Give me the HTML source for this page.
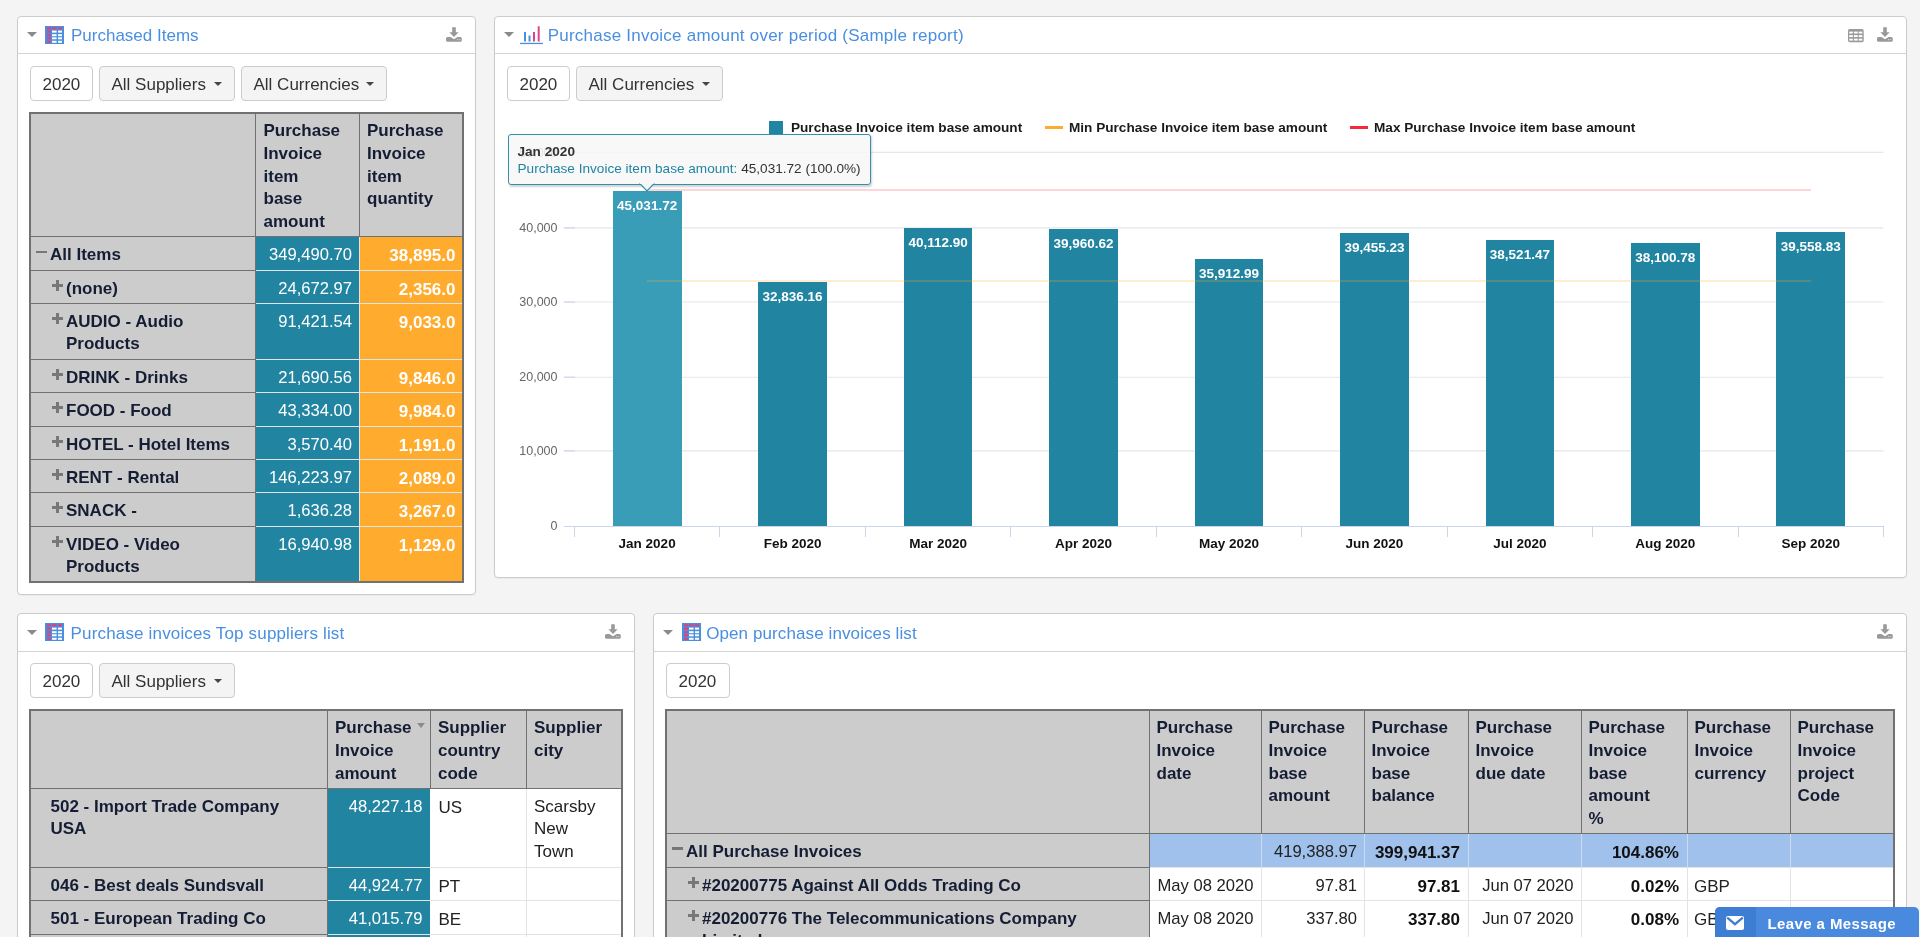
<!DOCTYPE html><html><head><meta charset="utf-8"><style>
html,body{margin:0;padding:0;}
body{will-change:transform;width:1920px;height:937px;overflow:hidden;position:relative;background:#f4f4f4;font-family:"Liberation Sans", sans-serif;}
</style></head><body>
<div style="position:absolute;left:17px;top:16px;width:457px;height:577px;border:1px solid #cbcbcb;border-radius:4px;background:#fff;box-shadow:0 1px 1px rgba(0,0,0,0.04)"></div>
<div style="position:absolute;left:18px;top:53px;width:457px;height:1px;background:#d4d4d4;"></div>
<div style="position:absolute;left:27px;top:32px;width:0;height:0;border-left:5.0px solid transparent;border-right:5.0px solid transparent;border-top:5px solid #8a8a8a"></div>
<svg style="position:absolute;left:45px;top:26px" width="19" height="18" viewBox="0 0 19 18">
<rect x="0" y="0" width="19" height="18" fill="#4a8fdf"/>
<g fill="#e0407a">
<rect x="2" y="1.3" width="4" height="2"/><rect x="7" y="1.3" width="4.6" height="2"/><rect x="13" y="1.3" width="4" height="2"/>
<rect x="2" y="4.6" width="4" height="2"/><rect x="2" y="8.2" width="4" height="2"/><rect x="2" y="11.3" width="4" height="2"/><rect x="2" y="14.8" width="4" height="2"/>
</g>
<g fill="#fff">
<rect x="7" y="4.6" width="4.6" height="2"/><rect x="13" y="4.6" width="4" height="2"/>
<rect x="7" y="8.2" width="4.6" height="2"/><rect x="13" y="8.2" width="4" height="2"/>
<rect x="7" y="11.3" width="4.6" height="2"/><rect x="13" y="11.3" width="4" height="2"/>
<rect x="7" y="14.8" width="4.6" height="2"/><rect x="13" y="14.8" width="4" height="2"/>
</g></svg>
<div style="position:absolute;left:71px;top:27.00px;font-size:17px;line-height:17px;font-weight:normal;color:#4a8fdf;white-space:nowrap;">Purchased Items</div>
<svg style="position:absolute;left:446px;top:27px" width="16" height="15" viewBox="0 0 16 15">
<path fill="#999" d="M6.2 0.2h3.6v5.1h2.9L8 9.9 3.3 5.3h2.9z"/>
<path fill="#999" d="M0 11.5Q0 10 1.5 10H4.4L8 12.3 11.6 10H14.3Q15.8 10 15.8 11.5V13.2Q15.8 14.7 14.3 14.7H1.5Q0 14.7 0 13.2Z"/>
<circle cx="11.6" cy="12.6" r="0.65" fill="#ddd"/><circle cx="13.8" cy="12.6" r="0.65" fill="#ddd"/>
</svg>
<div style="position:absolute;left:30px;top:66px;width:61px;height:33px;border:1px solid #cccccc;border-radius:4px;background:#fff"></div>
<div style="position:absolute;left:42.5px;top:75.50px;font-size:17px;line-height:17px;font-weight:normal;color:#333;white-space:nowrap;">2020</div>
<div style="position:absolute;left:99px;top:66px;width:134px;height:33px;border:1px solid #cccccc;border-radius:4px;background:#f4f4f4"></div>
<div style="position:absolute;left:111.5px;top:75.50px;font-size:17px;line-height:17px;font-weight:normal;color:#333;white-space:nowrap;">All Suppliers</div>
<div style="position:absolute;left:214px;top:81.5px;width:0;height:0;border-left:4.0px solid transparent;border-right:4.0px solid transparent;border-top:4.3px solid #444"></div>
<div style="position:absolute;left:241px;top:66px;width:144px;height:33px;border:1px solid #cccccc;border-radius:4px;background:#f4f4f4"></div>
<div style="position:absolute;left:253.5px;top:75.50px;font-size:17px;line-height:17px;font-weight:normal;color:#333;white-space:nowrap;">All Currencies</div>
<div style="position:absolute;left:366px;top:81.5px;width:0;height:0;border-left:4.0px solid transparent;border-right:4.0px solid transparent;border-top:4.3px solid #444"></div>
<div style="position:absolute;left:29px;top:112px;width:435px;height:471px;background:#717171;"></div>
<div style="position:absolute;left:31px;top:114px;width:431px;height:467px;background:#cccccc;"></div>
<div style="position:absolute;left:256px;top:237px;width:103px;height:33px;background:#2185a1;"></div>
<div style="position:absolute;left:360px;top:237px;width:102px;height:33px;background:#ffab2d;"></div>
<div style="position:absolute;left:256px;top:270px;width:206px;height:1px;background:#dfe6ea;"></div>
<div style="position:absolute;left:256px;top:271px;width:103px;height:32px;background:#2185a1;"></div>
<div style="position:absolute;left:360px;top:271px;width:102px;height:32px;background:#ffab2d;"></div>
<div style="position:absolute;left:256px;top:303px;width:206px;height:1px;background:#dfe6ea;"></div>
<div style="position:absolute;left:256px;top:304px;width:103px;height:55px;background:#2185a1;"></div>
<div style="position:absolute;left:360px;top:304px;width:102px;height:55px;background:#ffab2d;"></div>
<div style="position:absolute;left:256px;top:359px;width:206px;height:1px;background:#dfe6ea;"></div>
<div style="position:absolute;left:256px;top:360px;width:103px;height:32px;background:#2185a1;"></div>
<div style="position:absolute;left:360px;top:360px;width:102px;height:32px;background:#ffab2d;"></div>
<div style="position:absolute;left:256px;top:392px;width:206px;height:1px;background:#dfe6ea;"></div>
<div style="position:absolute;left:256px;top:393px;width:103px;height:33px;background:#2185a1;"></div>
<div style="position:absolute;left:360px;top:393px;width:102px;height:33px;background:#ffab2d;"></div>
<div style="position:absolute;left:256px;top:426px;width:206px;height:1px;background:#dfe6ea;"></div>
<div style="position:absolute;left:256px;top:427px;width:103px;height:32px;background:#2185a1;"></div>
<div style="position:absolute;left:360px;top:427px;width:102px;height:32px;background:#ffab2d;"></div>
<div style="position:absolute;left:256px;top:459px;width:206px;height:1px;background:#dfe6ea;"></div>
<div style="position:absolute;left:256px;top:460px;width:103px;height:32px;background:#2185a1;"></div>
<div style="position:absolute;left:360px;top:460px;width:102px;height:32px;background:#ffab2d;"></div>
<div style="position:absolute;left:256px;top:492px;width:206px;height:1px;background:#dfe6ea;"></div>
<div style="position:absolute;left:256px;top:493px;width:103px;height:33px;background:#2185a1;"></div>
<div style="position:absolute;left:360px;top:493px;width:102px;height:33px;background:#ffab2d;"></div>
<div style="position:absolute;left:256px;top:526px;width:206px;height:1px;background:#dfe6ea;"></div>
<div style="position:absolute;left:256px;top:527px;width:103px;height:54px;background:#2185a1;"></div>
<div style="position:absolute;left:360px;top:527px;width:102px;height:54px;background:#ffab2d;"></div>
<div style="position:absolute;left:359px;top:237px;width:1px;height:344px;background:#e9e4dc;"></div>
<div style="position:absolute;left:255px;top:114px;width:1px;height:467px;background:#717171;"></div>
<div style="position:absolute;left:359px;top:114px;width:1px;height:123px;background:#717171;"></div>
<div style="position:absolute;left:31px;top:236px;width:431px;height:1px;background:#717171;"></div>
<div style="position:absolute;left:31px;top:270px;width:224px;height:1px;background:#717171;"></div>
<div style="position:absolute;left:31px;top:303px;width:224px;height:1px;background:#717171;"></div>
<div style="position:absolute;left:31px;top:359px;width:224px;height:1px;background:#717171;"></div>
<div style="position:absolute;left:31px;top:392px;width:224px;height:1px;background:#717171;"></div>
<div style="position:absolute;left:31px;top:426px;width:224px;height:1px;background:#717171;"></div>
<div style="position:absolute;left:31px;top:459px;width:224px;height:1px;background:#717171;"></div>
<div style="position:absolute;left:31px;top:492px;width:224px;height:1px;background:#717171;"></div>
<div style="position:absolute;left:31px;top:526px;width:224px;height:1px;background:#717171;"></div>
<div style="position:absolute;left:263.5px;top:120.15px;font-size:17px;line-height:22.7px;font-weight:bold;color:#141d33;white-space:nowrap;">Purchase<br>Invoice<br>item<br>base<br>amount</div>
<div style="position:absolute;left:367px;top:120.15px;font-size:17px;line-height:22.7px;font-weight:bold;color:#141d33;white-space:nowrap;">Purchase<br>Invoice<br>item<br>quantity</div>
<div style="position:absolute;left:36px;top:250.6px;width:11px;height:2.6px;background:#777;"></div>
<div style="position:absolute;left:50px;top:243.65px;font-size:17px;line-height:22.7px;font-weight:bold;color:#141d33;white-space:nowrap;">All Items</div>
<div style="position:absolute;right:1568px;text-align:right;top:246.70px;font-size:16.6px;line-height:16.6px;font-weight:normal;color:#fff;white-space:nowrap;">349,490.70</div>
<div style="position:absolute;right:1464.5px;text-align:right;top:246.50px;font-size:17px;line-height:17px;font-weight:bold;color:#fff;white-space:nowrap;">38,895.0</div>
<div style="position:absolute;left:52px;top:284.2px;width:11px;height:2.6px;background:#777;"></div>
<div style="position:absolute;left:56.2px;top:280px;width:2.6px;height:11px;background:#777;"></div>
<div style="position:absolute;left:66px;top:277.65px;font-size:17px;line-height:22.7px;font-weight:bold;color:#141d33;white-space:nowrap;">(none)</div>
<div style="position:absolute;right:1568px;text-align:right;top:280.70px;font-size:16.6px;line-height:16.6px;font-weight:normal;color:#fff;white-space:nowrap;">24,672.97</div>
<div style="position:absolute;right:1464.5px;text-align:right;top:280.50px;font-size:17px;line-height:17px;font-weight:bold;color:#fff;white-space:nowrap;">2,356.0</div>
<div style="position:absolute;left:52px;top:317.2px;width:11px;height:2.6px;background:#777;"></div>
<div style="position:absolute;left:56.2px;top:313px;width:2.6px;height:11px;background:#777;"></div>
<div style="position:absolute;left:66px;top:310.65px;font-size:17px;line-height:22.7px;font-weight:bold;color:#141d33;white-space:nowrap;">AUDIO - Audio<br>Products</div>
<div style="position:absolute;right:1568px;text-align:right;top:313.70px;font-size:16.6px;line-height:16.6px;font-weight:normal;color:#fff;white-space:nowrap;">91,421.54</div>
<div style="position:absolute;right:1464.5px;text-align:right;top:313.50px;font-size:17px;line-height:17px;font-weight:bold;color:#fff;white-space:nowrap;">9,033.0</div>
<div style="position:absolute;left:52px;top:373.2px;width:11px;height:2.6px;background:#777;"></div>
<div style="position:absolute;left:56.2px;top:369px;width:2.6px;height:11px;background:#777;"></div>
<div style="position:absolute;left:66px;top:366.65px;font-size:17px;line-height:22.7px;font-weight:bold;color:#141d33;white-space:nowrap;">DRINK - Drinks</div>
<div style="position:absolute;right:1568px;text-align:right;top:369.70px;font-size:16.6px;line-height:16.6px;font-weight:normal;color:#fff;white-space:nowrap;">21,690.56</div>
<div style="position:absolute;right:1464.5px;text-align:right;top:369.50px;font-size:17px;line-height:17px;font-weight:bold;color:#fff;white-space:nowrap;">9,846.0</div>
<div style="position:absolute;left:52px;top:406.2px;width:11px;height:2.6px;background:#777;"></div>
<div style="position:absolute;left:56.2px;top:402px;width:2.6px;height:11px;background:#777;"></div>
<div style="position:absolute;left:66px;top:399.65px;font-size:17px;line-height:22.7px;font-weight:bold;color:#141d33;white-space:nowrap;">FOOD - Food</div>
<div style="position:absolute;right:1568px;text-align:right;top:402.70px;font-size:16.6px;line-height:16.6px;font-weight:normal;color:#fff;white-space:nowrap;">43,334.00</div>
<div style="position:absolute;right:1464.5px;text-align:right;top:402.50px;font-size:17px;line-height:17px;font-weight:bold;color:#fff;white-space:nowrap;">9,984.0</div>
<div style="position:absolute;left:52px;top:440.2px;width:11px;height:2.6px;background:#777;"></div>
<div style="position:absolute;left:56.2px;top:436px;width:2.6px;height:11px;background:#777;"></div>
<div style="position:absolute;left:66px;top:433.65px;font-size:17px;line-height:22.7px;font-weight:bold;color:#141d33;white-space:nowrap;">HOTEL - Hotel Items</div>
<div style="position:absolute;right:1568px;text-align:right;top:436.70px;font-size:16.6px;line-height:16.6px;font-weight:normal;color:#fff;white-space:nowrap;">3,570.40</div>
<div style="position:absolute;right:1464.5px;text-align:right;top:436.50px;font-size:17px;line-height:17px;font-weight:bold;color:#fff;white-space:nowrap;">1,191.0</div>
<div style="position:absolute;left:52px;top:473.2px;width:11px;height:2.6px;background:#777;"></div>
<div style="position:absolute;left:56.2px;top:469px;width:2.6px;height:11px;background:#777;"></div>
<div style="position:absolute;left:66px;top:466.65px;font-size:17px;line-height:22.7px;font-weight:bold;color:#141d33;white-space:nowrap;">RENT - Rental</div>
<div style="position:absolute;right:1568px;text-align:right;top:469.70px;font-size:16.6px;line-height:16.6px;font-weight:normal;color:#fff;white-space:nowrap;">146,223.97</div>
<div style="position:absolute;right:1464.5px;text-align:right;top:469.50px;font-size:17px;line-height:17px;font-weight:bold;color:#fff;white-space:nowrap;">2,089.0</div>
<div style="position:absolute;left:52px;top:506.2px;width:11px;height:2.6px;background:#777;"></div>
<div style="position:absolute;left:56.2px;top:502px;width:2.6px;height:11px;background:#777;"></div>
<div style="position:absolute;left:66px;top:499.65px;font-size:17px;line-height:22.7px;font-weight:bold;color:#141d33;white-space:nowrap;">SNACK -</div>
<div style="position:absolute;right:1568px;text-align:right;top:502.70px;font-size:16.6px;line-height:16.6px;font-weight:normal;color:#fff;white-space:nowrap;">1,636.28</div>
<div style="position:absolute;right:1464.5px;text-align:right;top:502.50px;font-size:17px;line-height:17px;font-weight:bold;color:#fff;white-space:nowrap;">3,267.0</div>
<div style="position:absolute;left:52px;top:540.2px;width:11px;height:2.6px;background:#777;"></div>
<div style="position:absolute;left:56.2px;top:536px;width:2.6px;height:11px;background:#777;"></div>
<div style="position:absolute;left:66px;top:533.65px;font-size:17px;line-height:22.7px;font-weight:bold;color:#141d33;white-space:nowrap;">VIDEO - Video<br>Products</div>
<div style="position:absolute;right:1568px;text-align:right;top:536.70px;font-size:16.6px;line-height:16.6px;font-weight:normal;color:#fff;white-space:nowrap;">16,940.98</div>
<div style="position:absolute;right:1464.5px;text-align:right;top:536.50px;font-size:17px;line-height:17px;font-weight:bold;color:#fff;white-space:nowrap;">1,129.0</div>
<div style="position:absolute;left:494px;top:16px;width:1411px;height:560px;border:1px solid #cbcbcb;border-radius:4px;background:#fff;box-shadow:0 1px 1px rgba(0,0,0,0.04)"></div>
<div style="position:absolute;left:495px;top:53px;width:1411px;height:1px;background:#d4d4d4;"></div>
<div style="position:absolute;left:504px;top:32px;width:0;height:0;border-left:5.0px solid transparent;border-right:5.0px solid transparent;border-top:5px solid #8a8a8a"></div>
<svg style="position:absolute;left:519px;top:25px" width="26" height="20" viewBox="0 0 26 20">
<rect x="1" y="17.8" width="23" height="1.3" fill="#4a8fdf"/>
<rect x="5" y="7" width="2" height="9.5" fill="#4a8fdf"/>
<rect x="9.5" y="10.5" width="2" height="6" fill="#4a8fdf"/>
<rect x="14" y="7" width="2" height="9.5" fill="#d9468a"/>
<rect x="18.7" y="1.3" width="2" height="15.2" fill="#d9468a"/>
</svg>
<div style="position:absolute;left:547.7px;top:27.30px;font-size:17px;line-height:17px;font-weight:normal;color:#4a8fdf;white-space:nowrap;letter-spacing:0.23px;">Purchase Invoice amount over period (Sample report)</div>
<svg style="position:absolute;left:1848.1px;top:28.5px" width="16" height="14" viewBox="0 0 16 14">
<rect x="0" y="0" width="15.7" height="13.2" rx="1.7" fill="#9a9a9a"/>
<g fill="#fff">
<rect x="1.2" y="2.6" width="3.6" height="1.9"/><rect x="5.9" y="2.6" width="3.8" height="1.9"/><rect x="10.7" y="2.6" width="3.6" height="1.9"/>
<rect x="1.2" y="6.1" width="3.6" height="2"/><rect x="5.9" y="6.1" width="3.8" height="2"/><rect x="10.7" y="6.1" width="3.6" height="2"/>
<rect x="1.2" y="9.7" width="3.6" height="1.9"/><rect x="5.9" y="9.7" width="3.8" height="1.9"/><rect x="10.7" y="9.7" width="3.6" height="1.9"/>
</g></svg>
<svg style="position:absolute;left:1877px;top:27px" width="16" height="15" viewBox="0 0 16 15">
<path fill="#999" d="M6.2 0.2h3.6v5.1h2.9L8 9.9 3.3 5.3h2.9z"/>
<path fill="#999" d="M0 11.5Q0 10 1.5 10H4.4L8 12.3 11.6 10H14.3Q15.8 10 15.8 11.5V13.2Q15.8 14.7 14.3 14.7H1.5Q0 14.7 0 13.2Z"/>
<circle cx="11.6" cy="12.6" r="0.65" fill="#ddd"/><circle cx="13.8" cy="12.6" r="0.65" fill="#ddd"/>
</svg>
<div style="position:absolute;left:507px;top:66px;width:61px;height:33px;border:1px solid #cccccc;border-radius:4px;background:#fff"></div>
<div style="position:absolute;left:519.5px;top:75.50px;font-size:17px;line-height:17px;font-weight:normal;color:#333;white-space:nowrap;">2020</div>
<div style="position:absolute;left:576px;top:66px;width:145px;height:33px;border:1px solid #cccccc;border-radius:4px;background:#f4f4f4"></div>
<div style="position:absolute;left:588.5px;top:75.50px;font-size:17px;line-height:17px;font-weight:normal;color:#333;white-space:nowrap;">All Currencies</div>
<div style="position:absolute;left:702px;top:81.5px;width:0;height:0;border-left:4.0px solid transparent;border-right:4.0px solid transparent;border-top:4.3px solid #444"></div>
<div style="position:absolute;right:1362.5px;text-align:right;top:445.15px;font-size:12.5px;line-height:12.5px;font-weight:normal;color:#666;white-space:nowrap;">10,000</div>
<div style="position:absolute;right:1362.5px;text-align:right;top:371.45px;font-size:12.5px;line-height:12.5px;font-weight:normal;color:#666;white-space:nowrap;">20,000</div>
<div style="position:absolute;right:1362.5px;text-align:right;top:296.25px;font-size:12.5px;line-height:12.5px;font-weight:normal;color:#666;white-space:nowrap;">30,000</div>
<div style="position:absolute;right:1362.5px;text-align:right;top:222.15px;font-size:12.5px;line-height:12.5px;font-weight:normal;color:#666;white-space:nowrap;">40,000</div>
<div style="position:absolute;right:1362.5px;text-align:right;top:146.65px;font-size:12.5px;line-height:12.5px;font-weight:normal;color:#666;white-space:nowrap;">50,000</div>
<svg style="position:absolute;left:0;top:0" width="1920" height="600"><line x1="563.5" x2="1883.5" y1="450.9" y2="450.9" stroke="#e6e6e6" stroke-width="1.1"/><line x1="564" x2="575" y1="450.9" y2="450.9" stroke="#ccd6eb" stroke-width="1.1"/><line x1="563.5" x2="1883.5" y1="377.2" y2="377.2" stroke="#e6e6e6" stroke-width="1.1"/><line x1="564" x2="575" y1="377.2" y2="377.2" stroke="#ccd6eb" stroke-width="1.1"/><line x1="563.5" x2="1883.5" y1="302.0" y2="302.0" stroke="#e6e6e6" stroke-width="1.1"/><line x1="564" x2="575" y1="302.0" y2="302.0" stroke="#ccd6eb" stroke-width="1.1"/><line x1="563.5" x2="1883.5" y1="227.9" y2="227.9" stroke="#e6e6e6" stroke-width="1.1"/><line x1="564" x2="575" y1="227.9" y2="227.9" stroke="#ccd6eb" stroke-width="1.1"/><line x1="563.5" x2="1883.5" y1="152.4" y2="152.4" stroke="#e6e6e6" stroke-width="1.1"/><line x1="564" x2="575" y1="152.4" y2="152.4" stroke="#ccd6eb" stroke-width="1.1"/></svg>
<div style="position:absolute;right:1362.5px;text-align:right;top:520.15px;font-size:12.5px;line-height:12.5px;font-weight:normal;color:#666;white-space:nowrap;">0</div>
<div style="position:absolute;left:612.75px;top:191.16px;width:68.75px;height:334.84px;background:#3a9db8;"></div>
<div style="position:absolute;left:587.13px;width:120px;top:198.83px;font-size:13.5px;line-height:13.5px;font-weight:bold;color:#fff;text-align:center;white-space:nowrap">45,031.72</div>
<div style="position:absolute;left:587.13px;width:120px;top:536.77px;font-size:13.5px;line-height:13.5px;font-weight:bold;color:#111;text-align:center;white-space:nowrap">Jan 2020</div>
<div style="position:absolute;left:758.22px;top:282.39px;width:68.75px;height:243.61px;background:#2185a1;"></div>
<div style="position:absolute;left:732.59px;width:120px;top:290.06px;font-size:13.5px;line-height:13.5px;font-weight:bold;color:#fff;text-align:center;white-space:nowrap">32,836.16</div>
<div style="position:absolute;left:732.59px;width:120px;top:536.77px;font-size:13.5px;line-height:13.5px;font-weight:bold;color:#111;text-align:center;white-space:nowrap">Feb 2020</div>
<div style="position:absolute;left:903.67px;top:227.96px;width:68.75px;height:298.04px;background:#2185a1;"></div>
<div style="position:absolute;left:878.05px;width:120px;top:235.63px;font-size:13.5px;line-height:13.5px;font-weight:bold;color:#fff;text-align:center;white-space:nowrap">40,112.90</div>
<div style="position:absolute;left:878.05px;width:120px;top:536.77px;font-size:13.5px;line-height:13.5px;font-weight:bold;color:#111;text-align:center;white-space:nowrap">Mar 2020</div>
<div style="position:absolute;left:1049.13px;top:229.09px;width:68.75px;height:296.91px;background:#2185a1;"></div>
<div style="position:absolute;left:1023.51px;width:120px;top:236.77px;font-size:13.5px;line-height:13.5px;font-weight:bold;color:#fff;text-align:center;white-space:nowrap">39,960.62</div>
<div style="position:absolute;left:1023.51px;width:120px;top:536.77px;font-size:13.5px;line-height:13.5px;font-weight:bold;color:#111;text-align:center;white-space:nowrap">Apr 2020</div>
<div style="position:absolute;left:1194.60px;top:259.37px;width:68.75px;height:266.63px;background:#2185a1;"></div>
<div style="position:absolute;left:1168.97px;width:120px;top:267.04px;font-size:13.5px;line-height:13.5px;font-weight:bold;color:#fff;text-align:center;white-space:nowrap">35,912.99</div>
<div style="position:absolute;left:1168.97px;width:120px;top:536.77px;font-size:13.5px;line-height:13.5px;font-weight:bold;color:#111;text-align:center;white-space:nowrap">May 2020</div>
<div style="position:absolute;left:1340.06px;top:232.87px;width:68.75px;height:293.13px;background:#2185a1;"></div>
<div style="position:absolute;left:1314.43px;width:120px;top:240.55px;font-size:13.5px;line-height:13.5px;font-weight:bold;color:#fff;text-align:center;white-space:nowrap">39,455.23</div>
<div style="position:absolute;left:1314.43px;width:120px;top:536.77px;font-size:13.5px;line-height:13.5px;font-weight:bold;color:#111;text-align:center;white-space:nowrap">Jun 2020</div>
<div style="position:absolute;left:1485.51px;top:239.86px;width:68.75px;height:286.14px;background:#2185a1;"></div>
<div style="position:absolute;left:1459.89px;width:120px;top:247.53px;font-size:13.5px;line-height:13.5px;font-weight:bold;color:#fff;text-align:center;white-space:nowrap">38,521.47</div>
<div style="position:absolute;left:1459.89px;width:120px;top:536.77px;font-size:13.5px;line-height:13.5px;font-weight:bold;color:#111;text-align:center;white-space:nowrap">Jul 2020</div>
<div style="position:absolute;left:1630.97px;top:243.01px;width:68.75px;height:282.99px;background:#2185a1;"></div>
<div style="position:absolute;left:1605.35px;width:120px;top:250.68px;font-size:13.5px;line-height:13.5px;font-weight:bold;color:#fff;text-align:center;white-space:nowrap">38,100.78</div>
<div style="position:absolute;left:1605.35px;width:120px;top:536.77px;font-size:13.5px;line-height:13.5px;font-weight:bold;color:#111;text-align:center;white-space:nowrap">Aug 2020</div>
<div style="position:absolute;left:1776.43px;top:232.10px;width:68.75px;height:293.90px;background:#2185a1;"></div>
<div style="position:absolute;left:1750.81px;width:120px;top:239.77px;font-size:13.5px;line-height:13.5px;font-weight:bold;color:#fff;text-align:center;white-space:nowrap">39,558.83</div>
<div style="position:absolute;left:1750.81px;width:120px;top:536.77px;font-size:13.5px;line-height:13.5px;font-weight:bold;color:#111;text-align:center;white-space:nowrap">Sep 2020</div>
<div style="position:absolute;left:647.13px;top:279.79px;width:1163.68px;height:2px;background:rgba(255,171,46,0.22);"></div>
<div style="position:absolute;left:647.13px;top:188.56px;width:1163.68px;height:2px;background:rgba(245,40,60,0.2);"></div>
<div style="position:absolute;left:563.5px;top:526px;width:1320px;height:1px;background:#ccd6eb;"></div>
<div style="position:absolute;left:573.90px;top:526px;width:1px;height:11px;background:#ccd6eb;"></div>
<div style="position:absolute;left:719.36px;top:526px;width:1px;height:11px;background:#ccd6eb;"></div>
<div style="position:absolute;left:864.82px;top:526px;width:1px;height:11px;background:#ccd6eb;"></div>
<div style="position:absolute;left:1010.28px;top:526px;width:1px;height:11px;background:#ccd6eb;"></div>
<div style="position:absolute;left:1155.74px;top:526px;width:1px;height:11px;background:#ccd6eb;"></div>
<div style="position:absolute;left:1301.20px;top:526px;width:1px;height:11px;background:#ccd6eb;"></div>
<div style="position:absolute;left:1446.66px;top:526px;width:1px;height:11px;background:#ccd6eb;"></div>
<div style="position:absolute;left:1592.12px;top:526px;width:1px;height:11px;background:#ccd6eb;"></div>
<div style="position:absolute;left:1737.58px;top:526px;width:1px;height:11px;background:#ccd6eb;"></div>
<div style="position:absolute;left:1883.04px;top:526px;width:1px;height:11px;background:#ccd6eb;"></div>
<div style="position:absolute;left:769px;top:120.5px;width:13.6px;height:13.6px;background:#2185a1;"></div>
<div style="position:absolute;left:791px;top:121.40px;font-size:13.6px;line-height:13.6px;font-weight:bold;color:#1a1a1a;white-space:nowrap;">Purchase Invoice item base amount</div>
<div style="position:absolute;left:1044.5px;top:126.3px;width:18.3px;height:2.4px;background:#ffab2e;"></div>
<div style="position:absolute;left:1069px;top:121.40px;font-size:13.6px;line-height:13.6px;font-weight:bold;color:#1a1a1a;white-space:nowrap;">Min Purchase Invoice item base amount</div>
<div style="position:absolute;left:1350px;top:126.3px;width:18.3px;height:2.4px;background:#f5283c;"></div>
<div style="position:absolute;left:1374px;top:121.40px;font-size:13.6px;line-height:13.6px;font-weight:bold;color:#1a1a1a;white-space:nowrap;">Max Purchase Invoice item base amount</div>
<div style="position:absolute;left:508px;top:134px;width:361px;height:48.5px;background:rgba(247,247,247,0.85);border:1px solid #3290aa;border-radius:3px;box-shadow:1px 1.5px 2px rgba(0,0,0,0.18)"></div>
<svg style="position:absolute;left:630px;top:178px" width="34" height="16" viewBox="0 0 34 16"><path d="M9.5 5.2 L17 12.8 L24.5 5.2" fill="rgba(248,248,248,0.96)" stroke="#2a8aa6" stroke-width="1.2"/><rect x="9.6" y="3" width="14.8" height="2.9" fill="#f8f8f8"/></svg>
<div style="position:absolute;left:517.5px;top:144.70px;font-size:13.6px;line-height:13.6px;font-weight:bold;color:#333;white-space:nowrap;">Jan 2020</div>
<div style="position:absolute;left:517.5px;top:161.90px;font-size:13.6px;line-height:13.6px;font-weight:normal;color:#333;white-space:nowrap;"><span style="color:#2185a1">Purchase Invoice item base amount: </span>45,031.72 (100.0%)</div>
<div style="position:absolute;left:17px;top:613px;width:616px;height:385px;border:1px solid #cbcbcb;border-radius:4px;background:#fff;box-shadow:0 1px 1px rgba(0,0,0,0.04)"></div>
<div style="position:absolute;left:18px;top:651px;width:616px;height:1px;background:#d4d4d4;"></div>
<div style="position:absolute;left:27px;top:630px;width:0;height:0;border-left:5.0px solid transparent;border-right:5.0px solid transparent;border-top:5px solid #8a8a8a"></div>
<svg style="position:absolute;left:45px;top:623px" width="19" height="18" viewBox="0 0 19 18">
<rect x="0" y="0" width="19" height="18" fill="#4a8fdf"/>
<g fill="#e0407a">
<rect x="2" y="1.3" width="4" height="2"/><rect x="7" y="1.3" width="4.6" height="2"/><rect x="13" y="1.3" width="4" height="2"/>
<rect x="2" y="4.6" width="4" height="2"/><rect x="2" y="8.2" width="4" height="2"/><rect x="2" y="11.3" width="4" height="2"/><rect x="2" y="14.8" width="4" height="2"/>
</g>
<g fill="#fff">
<rect x="7" y="4.6" width="4.6" height="2"/><rect x="13" y="4.6" width="4" height="2"/>
<rect x="7" y="8.2" width="4.6" height="2"/><rect x="13" y="8.2" width="4" height="2"/>
<rect x="7" y="11.3" width="4.6" height="2"/><rect x="13" y="11.3" width="4" height="2"/>
<rect x="7" y="14.8" width="4.6" height="2"/><rect x="13" y="14.8" width="4" height="2"/>
</g></svg>
<div style="position:absolute;left:70.6px;top:625.00px;font-size:17px;line-height:17px;font-weight:normal;color:#4a8fdf;white-space:nowrap;letter-spacing:0.16px;">Purchase invoices Top suppliers list</div>
<svg style="position:absolute;left:605px;top:624px" width="16" height="15" viewBox="0 0 16 15">
<path fill="#999" d="M6.2 0.2h3.6v5.1h2.9L8 9.9 3.3 5.3h2.9z"/>
<path fill="#999" d="M0 11.5Q0 10 1.5 10H4.4L8 12.3 11.6 10H14.3Q15.8 10 15.8 11.5V13.2Q15.8 14.7 14.3 14.7H1.5Q0 14.7 0 13.2Z"/>
<circle cx="11.6" cy="12.6" r="0.65" fill="#ddd"/><circle cx="13.8" cy="12.6" r="0.65" fill="#ddd"/>
</svg>
<div style="position:absolute;left:30px;top:663px;width:61px;height:33px;border:1px solid #cccccc;border-radius:4px;background:#fff"></div>
<div style="position:absolute;left:42.5px;top:672.50px;font-size:17px;line-height:17px;font-weight:normal;color:#333;white-space:nowrap;">2020</div>
<div style="position:absolute;left:99px;top:663px;width:134px;height:33px;border:1px solid #cccccc;border-radius:4px;background:#f4f4f4"></div>
<div style="position:absolute;left:111.5px;top:672.50px;font-size:17px;line-height:17px;font-weight:normal;color:#333;white-space:nowrap;">All Suppliers</div>
<div style="position:absolute;left:214px;top:678.5px;width:0;height:0;border-left:4.0px solid transparent;border-right:4.0px solid transparent;border-top:4.3px solid #444"></div>
<div style="position:absolute;left:29px;top:709px;width:594px;height:300px;background:#717171;"></div>
<div style="position:absolute;left:31px;top:711px;width:590px;height:300px;background:#cccccc;"></div>
<div style="position:absolute;left:327px;top:711px;width:1px;height:78px;background:#717171;"></div>
<div style="position:absolute;left:430px;top:711px;width:1px;height:78px;background:#717171;"></div>
<div style="position:absolute;left:526px;top:711px;width:1px;height:78px;background:#717171;"></div>
<div style="position:absolute;left:31px;top:788px;width:590px;height:1px;background:#717171;"></div>
<div style="position:absolute;left:327px;top:789px;width:1px;height:300px;background:#717171;"></div>
<div style="position:absolute;left:328px;top:789px;width:102px;height:78px;background:#2185a1;"></div>
<div style="position:absolute;left:430px;top:789px;width:191px;height:78px;background:#fff;"></div>
<div style="position:absolute;left:328px;top:868px;width:102px;height:32px;background:#2185a1;"></div>
<div style="position:absolute;left:430px;top:868px;width:191px;height:32px;background:#fff;"></div>
<div style="position:absolute;left:328px;top:901px;width:102px;height:33px;background:#2185a1;"></div>
<div style="position:absolute;left:430px;top:901px;width:191px;height:33px;background:#fff;"></div>
<div style="position:absolute;left:328px;top:935px;width:102px;height:65px;background:#2185a1;"></div>
<div style="position:absolute;left:430px;top:935px;width:191px;height:65px;background:#fff;"></div>
<div style="position:absolute;left:31px;top:867px;width:296px;height:1px;background:#717171;"></div>
<div style="position:absolute;left:328px;top:867px;width:102px;height:1px;background:#dfe6ea;"></div>
<div style="position:absolute;left:430px;top:867px;width:191px;height:1px;background:#e3e3e3;"></div>
<div style="position:absolute;left:31px;top:900px;width:296px;height:1px;background:#717171;"></div>
<div style="position:absolute;left:328px;top:900px;width:102px;height:1px;background:#dfe6ea;"></div>
<div style="position:absolute;left:430px;top:900px;width:191px;height:1px;background:#e3e3e3;"></div>
<div style="position:absolute;left:31px;top:934px;width:296px;height:1px;background:#717171;"></div>
<div style="position:absolute;left:328px;top:934px;width:102px;height:1px;background:#dfe6ea;"></div>
<div style="position:absolute;left:430px;top:934px;width:191px;height:1px;background:#e3e3e3;"></div>
<div style="position:absolute;left:526px;top:789px;width:1px;height:300px;background:#e3e3e3;"></div>
<div style="position:absolute;left:335px;top:717.15px;font-size:17px;line-height:22.7px;font-weight:bold;color:#141d33;white-space:nowrap;">Purchase<br>Invoice<br>amount</div>
<div style="position:absolute;left:417px;top:723px;width:0;height:0;border-left:4.5px solid transparent;border-right:4.5px solid transparent;border-top:5px solid #8a8a8a"></div>
<div style="position:absolute;left:438px;top:717.15px;font-size:17px;line-height:22.7px;font-weight:bold;color:#141d33;white-space:nowrap;">Supplier<br>country<br>code</div>
<div style="position:absolute;left:534px;top:717.15px;font-size:17px;line-height:22.7px;font-weight:bold;color:#141d33;white-space:nowrap;">Supplier<br>city</div>
<div style="position:absolute;left:50.5px;top:795.65px;font-size:17px;line-height:22.7px;font-weight:bold;color:#141d33;white-space:nowrap;">502 - Import Trade Company<br>USA</div>
<div style="position:absolute;right:1497.5px;text-align:right;top:798.70px;font-size:16.6px;line-height:16.6px;font-weight:normal;color:#fff;white-space:nowrap;">48,227.18</div>
<div style="position:absolute;left:438.5px;top:798.50px;font-size:17px;line-height:17px;font-weight:normal;color:#222;white-space:nowrap;">US</div>
<div style="position:absolute;left:534px;top:795.65px;font-size:17px;line-height:22.7px;font-weight:normal;color:#222;white-space:nowrap;">Scarsby<br>New<br>Town</div>
<div style="position:absolute;left:50.5px;top:874.65px;font-size:17px;line-height:22.7px;font-weight:bold;color:#141d33;white-space:nowrap;">046 - Best deals Sundsvall</div>
<div style="position:absolute;right:1497.5px;text-align:right;top:877.70px;font-size:16.6px;line-height:16.6px;font-weight:normal;color:#fff;white-space:nowrap;">44,924.77</div>
<div style="position:absolute;left:438.5px;top:877.50px;font-size:17px;line-height:17px;font-weight:normal;color:#222;white-space:nowrap;">PT</div>
<div style="position:absolute;left:50.5px;top:907.65px;font-size:17px;line-height:22.7px;font-weight:bold;color:#141d33;white-space:nowrap;">501 - European Trading Co</div>
<div style="position:absolute;right:1497.5px;text-align:right;top:910.70px;font-size:16.6px;line-height:16.6px;font-weight:normal;color:#fff;white-space:nowrap;">41,015.79</div>
<div style="position:absolute;left:438.5px;top:910.50px;font-size:17px;line-height:17px;font-weight:normal;color:#222;white-space:nowrap;">BE</div>
<div style="position:absolute;left:653px;top:613px;width:1252px;height:385px;border:1px solid #cbcbcb;border-radius:4px;background:#fff;box-shadow:0 1px 1px rgba(0,0,0,0.04)"></div>
<div style="position:absolute;left:654px;top:651px;width:1252px;height:1px;background:#d4d4d4;"></div>
<div style="position:absolute;left:663px;top:630px;width:0;height:0;border-left:5.0px solid transparent;border-right:5.0px solid transparent;border-top:5px solid #8a8a8a"></div>
<svg style="position:absolute;left:681.5px;top:623px" width="19" height="18" viewBox="0 0 19 18">
<rect x="0" y="0" width="19" height="18" fill="#4a8fdf"/>
<g fill="#e0407a">
<rect x="2" y="1.3" width="4" height="2"/><rect x="7" y="1.3" width="4.6" height="2"/><rect x="13" y="1.3" width="4" height="2"/>
<rect x="2" y="4.6" width="4" height="2"/><rect x="2" y="8.2" width="4" height="2"/><rect x="2" y="11.3" width="4" height="2"/><rect x="2" y="14.8" width="4" height="2"/>
</g>
<g fill="#fff">
<rect x="7" y="4.6" width="4.6" height="2"/><rect x="13" y="4.6" width="4" height="2"/>
<rect x="7" y="8.2" width="4.6" height="2"/><rect x="13" y="8.2" width="4" height="2"/>
<rect x="7" y="11.3" width="4.6" height="2"/><rect x="13" y="11.3" width="4" height="2"/>
<rect x="7" y="14.8" width="4.6" height="2"/><rect x="13" y="14.8" width="4" height="2"/>
</g></svg>
<div style="position:absolute;left:706.2px;top:625.00px;font-size:17px;line-height:17px;font-weight:normal;color:#4a8fdf;white-space:nowrap;letter-spacing:0.1px;">Open purchase invoices list</div>
<svg style="position:absolute;left:1877px;top:624px" width="16" height="15" viewBox="0 0 16 15">
<path fill="#999" d="M6.2 0.2h3.6v5.1h2.9L8 9.9 3.3 5.3h2.9z"/>
<path fill="#999" d="M0 11.5Q0 10 1.5 10H4.4L8 12.3 11.6 10H14.3Q15.8 10 15.8 11.5V13.2Q15.8 14.7 14.3 14.7H1.5Q0 14.7 0 13.2Z"/>
<circle cx="11.6" cy="12.6" r="0.65" fill="#ddd"/><circle cx="13.8" cy="12.6" r="0.65" fill="#ddd"/>
</svg>
<div style="position:absolute;left:666px;top:663px;width:62px;height:33px;border:1px solid #cccccc;border-radius:4px;background:#fff"></div>
<div style="position:absolute;left:678.5px;top:672.50px;font-size:17px;line-height:17px;font-weight:normal;color:#333;white-space:nowrap;">2020</div>
<div style="position:absolute;left:665px;top:709px;width:1230px;height:300px;background:#717171;"></div>
<div style="position:absolute;left:667px;top:711px;width:1226px;height:300px;background:#cccccc;"></div>
<div style="position:absolute;left:1149px;top:711px;width:1px;height:123px;background:#717171;"></div>
<div style="position:absolute;left:1261px;top:711px;width:1px;height:123px;background:#717171;"></div>
<div style="position:absolute;left:1364px;top:711px;width:1px;height:123px;background:#717171;"></div>
<div style="position:absolute;left:1468px;top:711px;width:1px;height:123px;background:#717171;"></div>
<div style="position:absolute;left:1581px;top:711px;width:1px;height:123px;background:#717171;"></div>
<div style="position:absolute;left:1687px;top:711px;width:1px;height:123px;background:#717171;"></div>
<div style="position:absolute;left:1790px;top:711px;width:1px;height:123px;background:#717171;"></div>
<div style="position:absolute;left:667px;top:833px;width:1226px;height:1px;background:#717171;"></div>
<div style="position:absolute;left:1149px;top:834px;width:1px;height:300px;background:#717171;"></div>
<div style="position:absolute;left:1150px;top:834px;width:743px;height:33px;background:#9fc1ec;"></div>
<div style="position:absolute;left:1261px;top:834px;width:1px;height:33px;background:#c9daf2;"></div>
<div style="position:absolute;left:1364px;top:834px;width:1px;height:33px;background:#c9daf2;"></div>
<div style="position:absolute;left:1468px;top:834px;width:1px;height:33px;background:#c9daf2;"></div>
<div style="position:absolute;left:1581px;top:834px;width:1px;height:33px;background:#c9daf2;"></div>
<div style="position:absolute;left:1687px;top:834px;width:1px;height:33px;background:#c9daf2;"></div>
<div style="position:absolute;left:1790px;top:834px;width:1px;height:33px;background:#c9daf2;"></div>
<div style="position:absolute;left:1150px;top:867px;width:743px;height:200px;background:#fff;"></div>
<div style="position:absolute;left:1150px;top:867px;width:743px;height:1px;background:#e3e3e3;"></div>
<div style="position:absolute;left:1150px;top:900px;width:743px;height:1px;background:#e3e3e3;"></div>
<div style="position:absolute;left:1261px;top:868px;width:1px;height:200px;background:#e3e3e3;"></div>
<div style="position:absolute;left:1364px;top:868px;width:1px;height:200px;background:#e3e3e3;"></div>
<div style="position:absolute;left:1468px;top:868px;width:1px;height:200px;background:#e3e3e3;"></div>
<div style="position:absolute;left:1581px;top:868px;width:1px;height:200px;background:#e3e3e3;"></div>
<div style="position:absolute;left:1687px;top:868px;width:1px;height:200px;background:#e3e3e3;"></div>
<div style="position:absolute;left:1790px;top:868px;width:1px;height:200px;background:#e3e3e3;"></div>
<div style="position:absolute;left:667px;top:867px;width:482px;height:1px;background:#717171;"></div>
<div style="position:absolute;left:667px;top:900px;width:482px;height:1px;background:#717171;"></div>
<div style="position:absolute;left:1156.5px;top:717.15px;font-size:17px;line-height:22.7px;font-weight:bold;color:#141d33;white-space:nowrap;">Purchase<br>Invoice<br>date</div>
<div style="position:absolute;left:1268.5px;top:717.15px;font-size:17px;line-height:22.7px;font-weight:bold;color:#141d33;white-space:nowrap;">Purchase<br>Invoice<br>base<br>amount</div>
<div style="position:absolute;left:1371.5px;top:717.15px;font-size:17px;line-height:22.7px;font-weight:bold;color:#141d33;white-space:nowrap;">Purchase<br>Invoice<br>base<br>balance</div>
<div style="position:absolute;left:1475.5px;top:717.15px;font-size:17px;line-height:22.7px;font-weight:bold;color:#141d33;white-space:nowrap;">Purchase<br>Invoice<br>due date</div>
<div style="position:absolute;left:1588.5px;top:717.15px;font-size:17px;line-height:22.7px;font-weight:bold;color:#141d33;white-space:nowrap;">Purchase<br>Invoice<br>base<br>amount<br>%</div>
<div style="position:absolute;left:1694.5px;top:717.15px;font-size:17px;line-height:22.7px;font-weight:bold;color:#141d33;white-space:nowrap;">Purchase<br>Invoice<br>currency</div>
<div style="position:absolute;left:1797.5px;top:717.15px;font-size:17px;line-height:22.7px;font-weight:bold;color:#141d33;white-space:nowrap;">Purchase<br>Invoice<br>project<br>Code</div>
<div style="position:absolute;left:672px;top:847.4px;width:11px;height:2.6px;background:#777;"></div>
<div style="position:absolute;left:686px;top:840.65px;font-size:17px;line-height:22.7px;font-weight:bold;color:#141d33;white-space:nowrap;">All Purchase Invoices</div>
<div style="position:absolute;right:563px;text-align:right;top:843.70px;font-size:16.6px;line-height:16.6px;font-weight:normal;color:#222;white-space:nowrap;">419,388.97</div>
<div style="position:absolute;right:460px;text-align:right;top:843.50px;font-size:17px;line-height:17px;font-weight:bold;color:#111;white-space:nowrap;">399,941.37</div>
<div style="position:absolute;right:241px;text-align:right;top:843.50px;font-size:17px;line-height:17px;font-weight:bold;color:#111;white-space:nowrap;">104.86%</div>
<div style="position:absolute;left:687.8px;top:881.2px;width:11px;height:2.6px;background:#777;"></div>
<div style="position:absolute;left:692.0px;top:877px;width:2.6px;height:11px;background:#777;"></div>
<div style="position:absolute;left:702px;top:874.65px;font-size:17px;line-height:22.7px;font-weight:bold;color:#141d33;white-space:nowrap;">#20200775 Against All Odds Trading Co</div>
<div style="position:absolute;right:666.5px;text-align:right;top:877.70px;font-size:16.6px;line-height:16.6px;font-weight:normal;color:#222;white-space:nowrap;">May 08 2020</div>
<div style="position:absolute;right:563px;text-align:right;top:877.70px;font-size:16.6px;line-height:16.6px;font-weight:normal;color:#222;white-space:nowrap;">97.81</div>
<div style="position:absolute;right:460px;text-align:right;top:877.50px;font-size:17px;line-height:17px;font-weight:bold;color:#111;white-space:nowrap;">97.81</div>
<div style="position:absolute;right:346.5px;text-align:right;top:877.70px;font-size:16.6px;line-height:16.6px;font-weight:normal;color:#222;white-space:nowrap;">Jun 07 2020</div>
<div style="position:absolute;right:241px;text-align:right;top:877.50px;font-size:17px;line-height:17px;font-weight:bold;color:#111;white-space:nowrap;">0.02%</div>
<div style="position:absolute;left:1694px;top:877.50px;font-size:17px;line-height:17px;font-weight:normal;color:#222;white-space:nowrap;">GBP</div>
<div style="position:absolute;left:687.8px;top:914.2px;width:11px;height:2.6px;background:#777;"></div>
<div style="position:absolute;left:692.0px;top:910px;width:2.6px;height:11px;background:#777;"></div>
<div style="position:absolute;left:702px;top:907.65px;font-size:17px;line-height:22.7px;font-weight:bold;color:#141d33;white-space:nowrap;">#20200776 The Telecommunications Company<br>Limited</div>
<div style="position:absolute;right:666.5px;text-align:right;top:910.70px;font-size:16.6px;line-height:16.6px;font-weight:normal;color:#222;white-space:nowrap;">May 08 2020</div>
<div style="position:absolute;right:563px;text-align:right;top:910.70px;font-size:16.6px;line-height:16.6px;font-weight:normal;color:#222;white-space:nowrap;">337.80</div>
<div style="position:absolute;right:460px;text-align:right;top:910.50px;font-size:17px;line-height:17px;font-weight:bold;color:#111;white-space:nowrap;">337.80</div>
<div style="position:absolute;right:346.5px;text-align:right;top:910.70px;font-size:16.6px;line-height:16.6px;font-weight:normal;color:#222;white-space:nowrap;">Jun 07 2020</div>
<div style="position:absolute;right:241px;text-align:right;top:910.50px;font-size:17px;line-height:17px;font-weight:bold;color:#111;white-space:nowrap;">0.08%</div>
<div style="position:absolute;left:1694px;top:910.50px;font-size:17px;line-height:17px;font-weight:normal;color:#222;white-space:nowrap;">GBP</div>
<div style="position:absolute;left:1715px;top:907px;width:204px;height:40px;background:#4a8ade;border-radius:5px 5px 0 0;overflow:hidden"><div style="position:absolute;left:0;top:0;width:41px;height:40px;background:#3d7ed4"></div></div>
<svg style="position:absolute;left:1726px;top:916px" width="18" height="14" viewBox="0 0 18 14"><rect x="0" y="0" width="18" height="14" rx="2" fill="#fff"/><path d="M1.2 1.6 L9 8.2 L16.8 1.6" fill="none" stroke="#3d7ed4" stroke-width="2.2"/></svg>
<div style="position:absolute;left:1767.5px;top:915.50px;font-size:15px;line-height:15px;font-weight:bold;color:#fff;white-space:nowrap;letter-spacing:0.4px;">Leave a Message</div>
</body></html>
